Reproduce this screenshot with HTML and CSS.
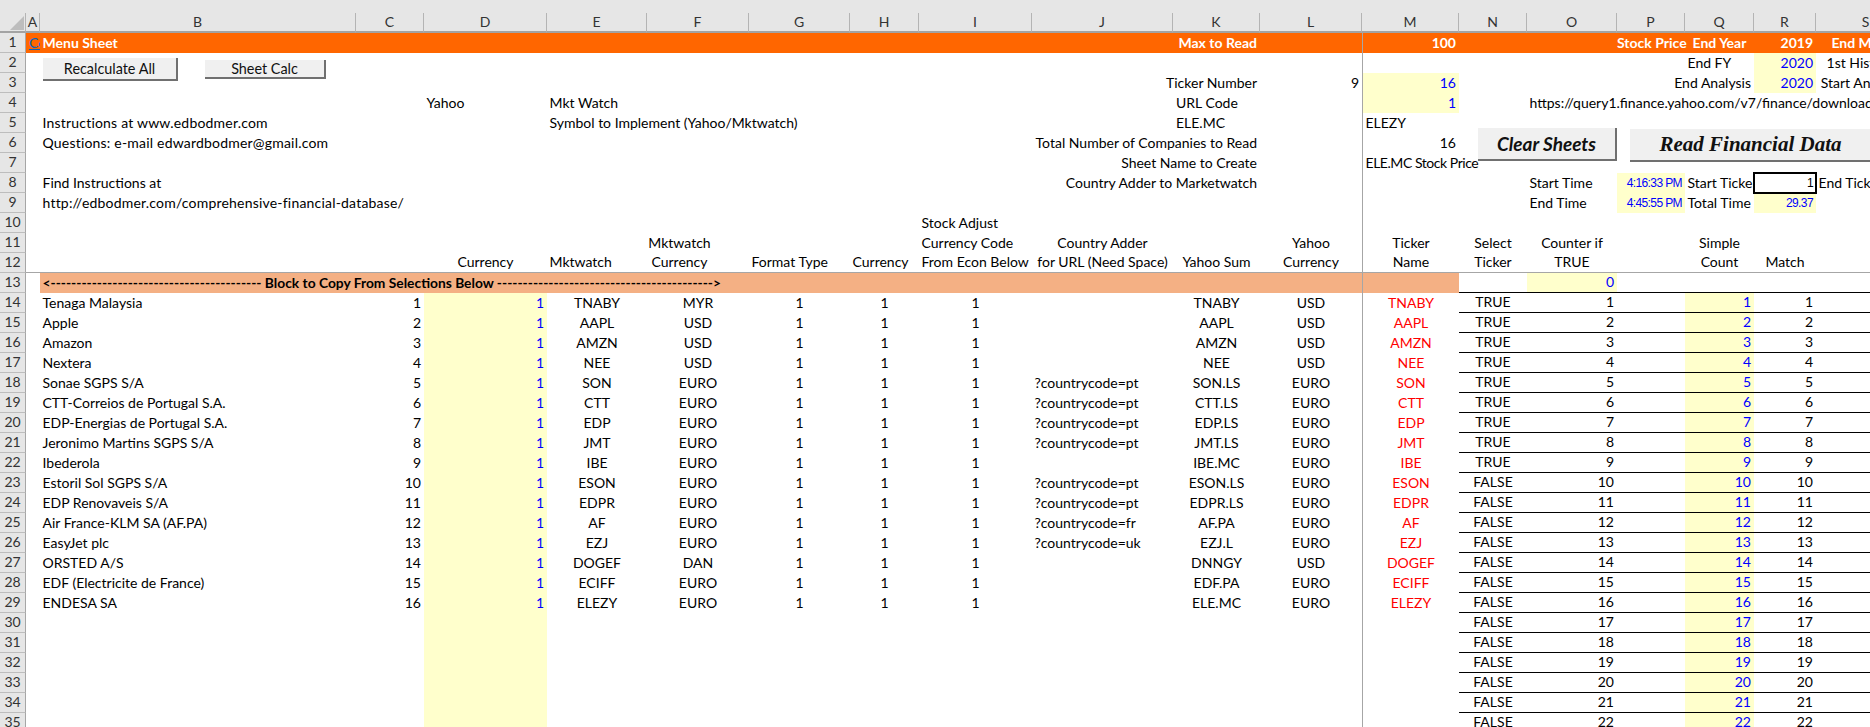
FILE: index.html
```html
<!DOCTYPE html>
<html lang="en">
<head>
<meta charset="utf-8">
<title>Menu Sheet</title>
<link rel="stylesheet" href="styles.css">
</head>
<body>
<div class="app">
<div class="topband"></div>
<table class="sheet">
<colgroup>
<col class="w-h"><col class="w-a"><col class="w-b"><col class="w-c"><col class="w-d"><col class="w-e"><col class="w-f"><col class="w-g"><col class="w-hh"><col class="w-i"><col class="w-j"><col class="w-k"><col class="w-l"><col class="w-m"><col class="w-n"><col class="w-o"><col class="w-p"><col class="w-q"><col class="w-r"><col class="w-s">
</colgroup>
<thead>
<tr class="cols">
<th class="corner"><svg class="tri" width="14" height="14" viewBox="0 0 14 14"><polygon points="14,0 14,14 0,14"/></svg></th>
<th>A</th><th>B</th><th>C</th><th>D</th><th>E</th><th>F</th><th>G</th><th>H</th><th>I</th><th>J</th><th>K</th><th>L</th><th>M</th><th>N</th><th>O</th><th>P</th><th>Q</th><th>R</th><th>S</th>
</tr>
</thead>
<tbody>
<tr class="orange"><th>1</th><td class="clip"><a class="link">Co</a></td><td class="l" colspan="9">Menu Sheet</td><td class="n">Max to Read</td><td></td><td class="n fz">100</td><td></td><td></td><td class="n">Stock Price</td><td class="c">End Year</td><td class="n">2019</td><td class="c">End Month</td></tr>
<tr><th>2</th><td colspan="12"></td><td class="fz"></td><td></td><td></td><td></td><td class="l">End FY</td><td class="n y b">2020</td><td class="c s1">1st Historic</td></tr>
<tr><th>3</th><td></td><td></td><td class="n" colspan="9">Ticker Number</td><td class="n">9</td><td class="n y b fz">16</td><td></td><td></td><td class="n" colspan="2">End Analysis</td><td class="n y b">2020</td><td class="c s1">Start Analysis</td></tr>
<tr><th>4</th><td></td><td></td><td></td><td class="l">Yahoo</td><td class="l">Mkt Watch</td><td colspan="5"></td><td class="l ind">URL Code</td><td></td><td class="n y b fz">1</td><td></td><td class="l" colspan="5">https://query1.finance.yahoo.com/v7/finance/download/ELE.MC</td></tr>
<tr><th>5</th><td></td><td class="l wide">Instructions at www.edbodmer.com</td><td></td><td></td><td class="l" colspan="6">Symbol to Implement (Yahoo/Mktwatch)</td><td class="l ind">ELE.MC</td><td></td><td class="l fz">ELEZY</td><td colspan="6"></td></tr>
<tr><th>6</th><td></td><td class="l wide">Questions: e-mail edwardbodmer@gmail.com</td><td class="n" colspan="9">Total Number of Companies to Read</td><td></td><td class="n fz">16</td><td colspan="6"></td></tr>
<tr><th>7</th><td></td><td></td><td class="n" colspan="9">Sheet Name to Create</td><td></td><td class="l fz tight">ELE.MC Stock Price</td><td colspan="6"></td></tr>
<tr><th>8</th><td></td><td class="l">Find Instructions at</td><td class="n" colspan="9">Country Adder to Marketwatch</td><td></td><td class="fz"></td><td></td><td class="l">Start Time</td><td class="n y b time">4:16:33 PM</td><td class="l clip">Start Ticker</td><td class="n time sel">1</td><td class="l">End Ticker</td></tr>
<tr><th>9</th><td></td><td class="l wide" colspan="3">http://edbodmer.com/comprehensive-financial-database/</td><td colspan="8"></td><td class="fz"></td><td></td><td class="l">End Time</td><td class="n y b time">4:45:55 PM</td><td class="l">Total Time</td><td class="n y b time">29.37</td><td></td></tr>
<tr><th>10</th><td colspan="8"></td><td class="l" colspan="2">Stock Adjust</td><td colspan="2"></td><td class="fz"></td><td colspan="6"></td></tr>
<tr><th>11</th><td colspan="5"></td><td class="c fh">Mktwatch</td><td></td><td></td><td class="l">Currency Code</td><td class="c">Country Adder</td><td></td><td class="c">Yahoo</td><td class="c fz">Ticker</td><td class="c">Select</td><td class="c">Counter if</td><td></td><td class="c">Simple</td><td></td><td></td></tr>
<tr class="freeze"><th>12</th><td></td><td></td><td></td><td class="c">Currency</td><td class="l">Mktwatch</td><td class="c fh">Currency</td><td class="l">Format Type</td><td class="l">Currency</td><td class="l">From Econ Below</td><td class="c">for URL (Need Space)</td><td class="c">Yahoo Sum</td><td class="c">Currency</td><td class="c fz">Name</td><td class="c">Ticker</td><td class="c">TRUE</td><td></td><td class="c">Count</td><td class="c">Match</td><td></td></tr>
<tr><th>13</th><td></td><td class="l peach strong" colspan="11">&lt;----------------------------------------- Block to Copy From Selections Below ------------------------------------------&gt;</td><td class="peach fz"></td><td class="k"></td><td class="n y b k">0</td><td class="k"></td><td class="k"></td><td class="k"></td><td class="k"></td></tr>
<tr><th>14</th><td></td><td class="l">Tenaga Malaysia</td><td class="n">1</td><td class="n y b">1</td><td class="c">TNABY</td><td class="c">MYR</td><td class="c">1</td><td class="c">1</td><td class="c">1</td><td></td><td class="c">TNABY</td><td class="c">USD</td><td class="c r fz">TNABY</td><td class="c k">TRUE</td><td class="n k">1</td><td class="k"></td><td class="n y b k">1</td><td class="n k">1</td><td class="k"></td></tr>
<tr><th>15</th><td></td><td class="l">Apple</td><td class="n">2</td><td class="n y b">1</td><td class="c">AAPL</td><td class="c">USD</td><td class="c">1</td><td class="c">1</td><td class="c">1</td><td></td><td class="c">AAPL</td><td class="c">USD</td><td class="c r fz">AAPL</td><td class="c k">TRUE</td><td class="n k">2</td><td class="k"></td><td class="n y b k">2</td><td class="n k">2</td><td class="k"></td></tr>
<tr><th>16</th><td></td><td class="l">Amazon</td><td class="n">3</td><td class="n y b">1</td><td class="c">AMZN</td><td class="c">USD</td><td class="c">1</td><td class="c">1</td><td class="c">1</td><td></td><td class="c">AMZN</td><td class="c">USD</td><td class="c r fz">AMZN</td><td class="c k">TRUE</td><td class="n k">3</td><td class="k"></td><td class="n y b k">3</td><td class="n k">3</td><td class="k"></td></tr>
<tr><th>17</th><td></td><td class="l">Nextera</td><td class="n">4</td><td class="n y b">1</td><td class="c">NEE</td><td class="c">USD</td><td class="c">1</td><td class="c">1</td><td class="c">1</td><td></td><td class="c">NEE</td><td class="c">USD</td><td class="c r fz">NEE</td><td class="c k">TRUE</td><td class="n k">4</td><td class="k"></td><td class="n y b k">4</td><td class="n k">4</td><td class="k"></td></tr>
<tr><th>18</th><td></td><td class="l">Sonae SGPS S/A</td><td class="n">5</td><td class="n y b">1</td><td class="c">SON</td><td class="c">EURO</td><td class="c">1</td><td class="c">1</td><td class="c">1</td><td class="l">?countrycode=pt</td><td class="c">SON.LS</td><td class="c">EURO</td><td class="c r fz">SON</td><td class="c k">TRUE</td><td class="n k">5</td><td class="k"></td><td class="n y b k">5</td><td class="n k">5</td><td class="k"></td></tr>
<tr><th>19</th><td></td><td class="l">CTT-Correios de Portugal S.A.</td><td class="n">6</td><td class="n y b">1</td><td class="c">CTT</td><td class="c">EURO</td><td class="c">1</td><td class="c">1</td><td class="c">1</td><td class="l">?countrycode=pt</td><td class="c">CTT.LS</td><td class="c">EURO</td><td class="c r fz">CTT</td><td class="c k">TRUE</td><td class="n k">6</td><td class="k"></td><td class="n y b k">6</td><td class="n k">6</td><td class="k"></td></tr>
<tr><th>20</th><td></td><td class="l">EDP-Energias de Portugal S.A.</td><td class="n">7</td><td class="n y b">1</td><td class="c">EDP</td><td class="c">EURO</td><td class="c">1</td><td class="c">1</td><td class="c">1</td><td class="l">?countrycode=pt</td><td class="c">EDP.LS</td><td class="c">EURO</td><td class="c r fz">EDP</td><td class="c k">TRUE</td><td class="n k">7</td><td class="k"></td><td class="n y b k">7</td><td class="n k">7</td><td class="k"></td></tr>
<tr><th>21</th><td></td><td class="l">Jeronimo Martins SGPS S/A</td><td class="n">8</td><td class="n y b">1</td><td class="c">JMT</td><td class="c">EURO</td><td class="c">1</td><td class="c">1</td><td class="c">1</td><td class="l">?countrycode=pt</td><td class="c">JMT.LS</td><td class="c">EURO</td><td class="c r fz">JMT</td><td class="c k">TRUE</td><td class="n k">8</td><td class="k"></td><td class="n y b k">8</td><td class="n k">8</td><td class="k"></td></tr>
<tr><th>22</th><td></td><td class="l">Ibederola</td><td class="n">9</td><td class="n y b">1</td><td class="c">IBE</td><td class="c">EURO</td><td class="c">1</td><td class="c">1</td><td class="c">1</td><td></td><td class="c">IBE.MC</td><td class="c">EURO</td><td class="c r fz">IBE</td><td class="c k">TRUE</td><td class="n k">9</td><td class="k"></td><td class="n y b k">9</td><td class="n k">9</td><td class="k"></td></tr>
<tr><th>23</th><td></td><td class="l">Estoril Sol SGPS S/A</td><td class="n">10</td><td class="n y b">1</td><td class="c">ESON</td><td class="c">EURO</td><td class="c">1</td><td class="c">1</td><td class="c">1</td><td class="l">?countrycode=pt</td><td class="c">ESON.LS</td><td class="c">EURO</td><td class="c r fz">ESON</td><td class="c k">FALSE</td><td class="n k">10</td><td class="k"></td><td class="n y b k">10</td><td class="n k">10</td><td class="k"></td></tr>
<tr><th>24</th><td></td><td class="l">EDP Renovaveis S/A</td><td class="n">11</td><td class="n y b">1</td><td class="c">EDPR</td><td class="c">EURO</td><td class="c">1</td><td class="c">1</td><td class="c">1</td><td class="l">?countrycode=pt</td><td class="c">EDPR.LS</td><td class="c">EURO</td><td class="c r fz">EDPR</td><td class="c k">FALSE</td><td class="n k">11</td><td class="k"></td><td class="n y b k">11</td><td class="n k">11</td><td class="k"></td></tr>
<tr><th>25</th><td></td><td class="l">Air France-KLM SA (AF.PA)</td><td class="n">12</td><td class="n y b">1</td><td class="c">AF</td><td class="c">EURO</td><td class="c">1</td><td class="c">1</td><td class="c">1</td><td class="l">?countrycode=fr</td><td class="c">AF.PA</td><td class="c">EURO</td><td class="c r fz">AF</td><td class="c k">FALSE</td><td class="n k">12</td><td class="k"></td><td class="n y b k">12</td><td class="n k">12</td><td class="k"></td></tr>
<tr><th>26</th><td></td><td class="l">EasyJet plc</td><td class="n">13</td><td class="n y b">1</td><td class="c">EZJ</td><td class="c">EURO</td><td class="c">1</td><td class="c">1</td><td class="c">1</td><td class="l">?countrycode=uk</td><td class="c">EZJ.L</td><td class="c">EURO</td><td class="c r fz">EZJ</td><td class="c k">FALSE</td><td class="n k">13</td><td class="k"></td><td class="n y b k">13</td><td class="n k">13</td><td class="k"></td></tr>
<tr><th>27</th><td></td><td class="l">ORSTED A/S</td><td class="n">14</td><td class="n y b">1</td><td class="c">DOGEF</td><td class="c">DAN</td><td class="c">1</td><td class="c">1</td><td class="c">1</td><td></td><td class="c">DNNGY</td><td class="c">USD</td><td class="c r fz">DOGEF</td><td class="c k">FALSE</td><td class="n k">14</td><td class="k"></td><td class="n y b k">14</td><td class="n k">14</td><td class="k"></td></tr>
<tr><th>28</th><td></td><td class="l">EDF (Electricite de France)</td><td class="n">15</td><td class="n y b">1</td><td class="c">ECIFF</td><td class="c">EURO</td><td class="c">1</td><td class="c">1</td><td class="c">1</td><td></td><td class="c">EDF.PA</td><td class="c">EURO</td><td class="c r fz">ECIFF</td><td class="c k">FALSE</td><td class="n k">15</td><td class="k"></td><td class="n y b k">15</td><td class="n k">15</td><td class="k"></td></tr>
<tr><th>29</th><td></td><td class="l">ENDESA SA</td><td class="n">16</td><td class="n y b">1</td><td class="c">ELEZY</td><td class="c">EURO</td><td class="c">1</td><td class="c">1</td><td class="c">1</td><td></td><td class="c">ELE.MC</td><td class="c">EURO</td><td class="c r fz">ELEZY</td><td class="c k">FALSE</td><td class="n k">16</td><td class="k"></td><td class="n y b k">16</td><td class="n k">16</td><td class="k"></td></tr>
<tr><th>30</th><td colspan="3"></td><td class="y"></td><td colspan="8"></td><td class="fz"></td><td class="c k">FALSE</td><td class="n k">17</td><td class="k"></td><td class="n y b k">17</td><td class="n k">17</td><td class="k"></td></tr>
<tr><th>31</th><td colspan="3"></td><td class="y"></td><td colspan="8"></td><td class="fz"></td><td class="c k">FALSE</td><td class="n k">18</td><td class="k"></td><td class="n y b k">18</td><td class="n k">18</td><td class="k"></td></tr>
<tr><th>32</th><td colspan="3"></td><td class="y"></td><td colspan="8"></td><td class="fz"></td><td class="c k">FALSE</td><td class="n k">19</td><td class="k"></td><td class="n y b k">19</td><td class="n k">19</td><td class="k"></td></tr>
<tr><th>33</th><td colspan="3"></td><td class="y"></td><td colspan="8"></td><td class="fz"></td><td class="c k">FALSE</td><td class="n k">20</td><td class="k"></td><td class="n y b k">20</td><td class="n k">20</td><td class="k"></td></tr>
<tr><th>34</th><td colspan="3"></td><td class="y"></td><td colspan="8"></td><td class="fz"></td><td class="c k">FALSE</td><td class="n k">21</td><td class="k"></td><td class="n y b k">21</td><td class="n k">21</td><td class="k"></td></tr>
<tr><th>35</th><td colspan="3"></td><td class="y"></td><td colspan="8"></td><td class="fz"></td><td class="c k">FALSE</td><td class="n k">22</td><td class="k"></td><td class="n y b k">22</td><td class="n k">22</td><td class="k"></td></tr>
</tbody>
</table>
<button class="btn btn-recalc">Recalculate All</button>
<button class="btn btn-calc">Sheet Calc</button>
<button class="btn btn-big btn-clear">Clear Sheets</button>
<button class="btn btn-big btn-read">Read Financial Data</button>
</div>
</body>
</html>
```
FILE: styles.css
```css
html, body { margin: 0; padding: 0; background: #fff; }
body { width: 1870px; height: 727px; overflow: hidden; }
.app { position: relative; width: 1870px; height: 727px; overflow: hidden; font-family: Lato, "Liberation Sans", sans-serif; font-size: 14px; color: #000; }
.topband { height: 13px; background: #e6e6e6; }
.sheet { border-collapse: separate; border-spacing: 0; table-layout: fixed; width: 1916px; }
.w-h { width: 26px; } .w-a { width: 14px; } .w-b { width: 316px; } .w-c { width: 68px; } .w-d { width: 123px; }
.w-e { width: 100px; } .w-f { width: 102px; } .w-g { width: 101px; } .w-hh { width: 69px; } .w-i { width: 113px; }
.w-j { width: 141px; } .w-k { width: 87px; } .w-l { width: 102px; } .w-m { width: 97px; } .w-n { width: 68px; }
.w-o { width: 90px; } .w-p { width: 68px; } .w-q { width: 69px; } .w-r { width: 62px; } .w-s { width: 100px; }
tr { height: 20px; }
td, th { box-sizing: border-box; height: 20px; padding: 0 0 1px; line-height: 18px; white-space: nowrap; font-weight: 400; }
th { background: #e6e6e6; color: #333; text-align: center; border-bottom: 1px solid #bdbdbd; border-right: 1px solid #a6a6a6; }
.cols th { border-bottom: 2px solid #a3a3a3; border-right: 1px solid #b4b4b4; line-height: 17px; }
.corner { position: relative; }
.tri { display: block; position: absolute; right: 1px; bottom: 1px; fill: #bdbdbd; }
.l { text-align: left; padding-left: 2.5px; }
.n { text-align: right; padding-right: 3px; }
.c { text-align: center; }
.ind { padding-left: 3px; }
.s1 { padding-right: 8px; }
.wide { letter-spacing: 0.2px; }
.tight { letter-spacing: -0.45px; }
.y { background: #ffffcc; }
.b { color: #0000ff; }
.r { color: #ff0000; }
.fz { border-left: 1px solid #a6a6a6; }
.k { border-bottom: 1px solid #000; }
.peach { background: #f4b084; }
.strong { font-weight: 700; font-size: 13.8px; }
.fh { padding-right: 37px; }
.clip { overflow: hidden; }
.link { color: #0563c1; text-decoration: underline; padding-left: 3px; }
.orange td { background: #ff6600; color: #fff; font-weight: 700; }
.orange .link { color: #0563c1; font-weight: 400; }
.freeze td { border-bottom: 1px solid #a6a6a6; }
.time { font-family: "Liberation Sans", sans-serif; font-size: 12px; letter-spacing: -0.6px; }
.sel { outline: 2px solid #000; outline-offset: -1px; }
.btn { position: absolute; box-sizing: border-box; padding: 0; margin: 0; background: #f0f0f0; color: #111; border: 0; border-right: 2px solid #707070; border-bottom: 2px solid #707070; font-family: Lato, "Liberation Sans", sans-serif; font-size: 14.4px; }
.btn-recalc { left: 43px; top: 58px; width: 135px; height: 23px; }
.btn-calc { left: 205px; top: 60px; width: 121px; height: 19px; }
.btn-big { font-weight: 700; font-style: italic; }
.btn-clear { left: 1478px; top: 128px; width: 139px; height: 33px; font-size: 19px; }
.btn-read { left: 1630px; top: 129px; width: 243px; height: 33px; font-family: "Liberation Serif", serif; font-size: 21px; }
```
